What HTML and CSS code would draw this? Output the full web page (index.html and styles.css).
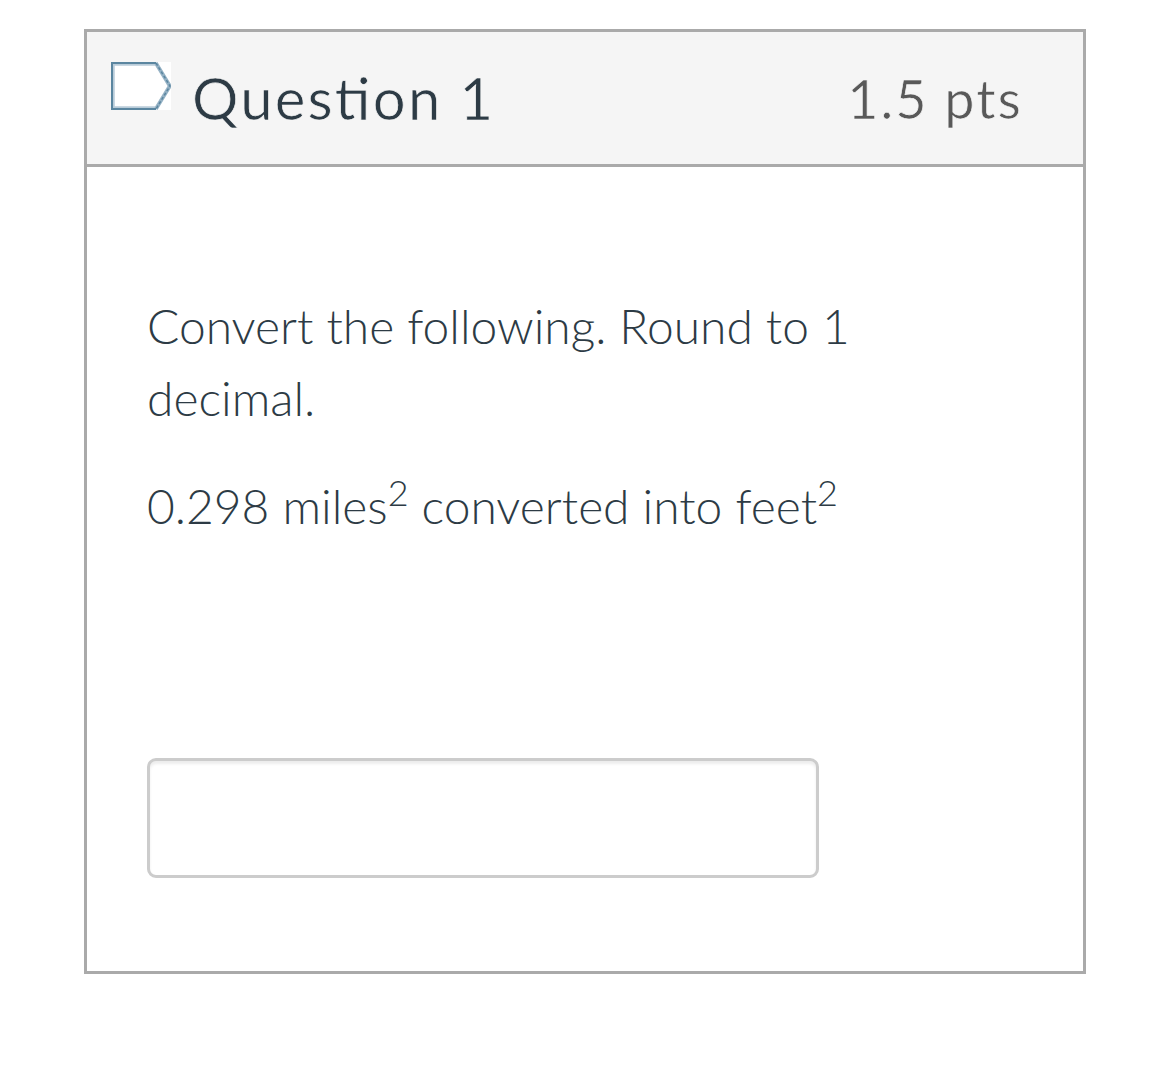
FILE: index.html
```html
<!DOCTYPE html>
<html lang="en">
<head>
  <meta charset="UTF-8">
  <meta name="viewport" content="width=device-width, initial-scale=1.0">
  <title>Question 1</title>
  <link rel="stylesheet" href="styles.css">
</head>
<body>
  <div class="question">
    <div class="header">
      <svg class="flag" width="60" height="48" viewBox="0 0 60 48">
        <rect width="60" height="48" fill="#fff"/>
        <path d="M2.5 2.500H45L58 24L45 45.500H2.500Z" fill="none" stroke="#b9ccd9" stroke-width="2.500"/>
        <path d="M45 1L59 24L45 47" fill="none" stroke="#94b1c4" stroke-width="3.500"/>
        <path d="M45 1H1V47H45" fill="none" stroke="#5b86a0" stroke-width="2"/>
        <path d="M45 1L59 24L45 47" fill="none" stroke="#5b86a0" stroke-width="1.500" stroke-dasharray="3 2"/>
      </svg>
      <h2 class="name">Question 1</h2>
      <span class="points">1.5 pts</span>
    </div>
    <div class="text">
      <p>Convert the following. Round to 1 decimal.</p>
      <p>0.298 miles<sup>2</sup> converted into feet<sup>2</sup></p>
      <input type="text" class="answer" aria-label="Answer">
    </div>
  </div>
</body>
</html>
```

FILE: styles.css
```css
body {
  margin: 0;
  padding: 29px 84px;
  background: #fff;
  font-family: Lato, sans-serif;
  color: #2d3b45;
}

.question {
  box-sizing: border-box;
  height: 945px;
  border: 3px solid #aaa;
}

.header {
  display: flex;
  box-sizing: border-box;
  height: 135px;
  padding: 30px 60px 0 24px;
  background: #f5f5f5;
  border-bottom: 3px solid #aaa;
}

.name {
  margin: 0 0 0 21px;
  font-size: 58px;
  font-weight: 400;
  line-height: 72px;
  letter-spacing: 2.2px;
  font-feature-settings: "liga" 1;
  -webkit-text-stroke: 0.7px #f5f5f5;
}

.points {
  margin-left: auto;
  font-size: 54px;
  line-height: 74px;
  letter-spacing: 2px;
  color: #595959;
  -webkit-text-stroke: 0.7px #f5f5f5;
}

.text {
  padding: 123px 60px 0;
  font-size: 47.95px;
  font-weight: 300;
  line-height: 72px;
}

.text p {
  margin: 0 0 36px;
}

sup {
  font-size: 36px;
  line-height: 0;
  position: relative;
  top: -18px;
  vertical-align: baseline;
}

.answer {
  display: block;
  box-sizing: border-box;
  width: 672px;
  height: 120px;
  margin-top: 216px;
  border: 3px solid #ccc;
  border-radius: 9px;
  box-shadow: inset 0 3px 3px rgba(0, 0, 0, 0.075);
}
```
